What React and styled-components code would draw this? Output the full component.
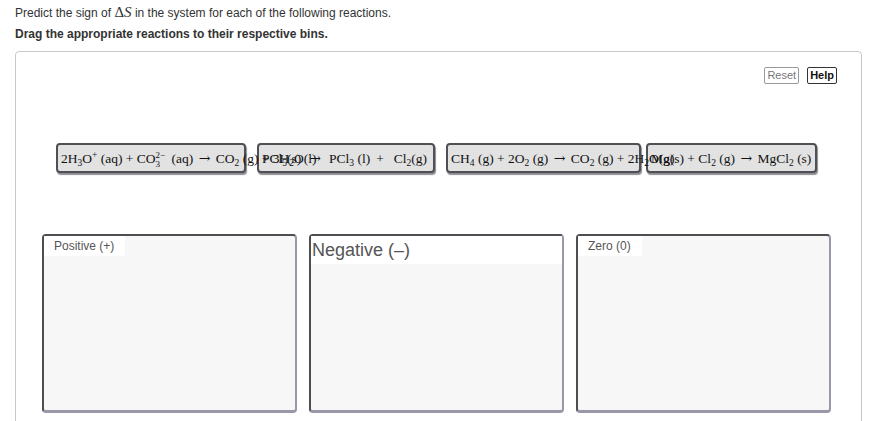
import React from "react";
import styled, { createGlobalStyle } from "styled-components";

const Global = createGlobalStyle`
  body {
    margin: 0;
    background: #fff;
    font-family: "Liberation Sans", Arial, sans-serif;
    color: #333;
  }
`;

const Page = styled.div`
  padding: 5px 15px 0 15px;
  height: 421px;
  box-sizing: border-box;
  overflow: hidden;
`;

const Prompt = styled.p`
  margin: 0;
  font-size: 12px;
  line-height: 14px;
  color: #333;
`;

const Instruction = styled(Prompt)`
  margin-top: 7px;
  font-weight: bold;
`;

const Delta = styled.span`
  font-family: "Liberation Serif", serif;
  font-size: 15px;
`;

const Var = styled.i`
  font-family: "Liberation Serif", serif;
  font-size: 15px;
`;

const Panel = styled.div`
  margin-top: 10px;
  border: 1px solid #c8c8c8;
  border-radius: 4px 4px 0 0;
  width: 847px;
  height: 400px;
  box-sizing: border-box;
  padding: 15px 24px 0 26px;
`;

const Toolbar = styled.div`
  display: flex;
  justify-content: flex-end;
  gap: 8px;
`;

const ToolButton = styled.button`
  font-family: "Liberation Sans", Arial, sans-serif;
  font-size: 11px;
  line-height: 13px;
  padding: 1px 2px;
  background: #fff;
  border-radius: 2px;
  border: 1px solid ${p => (p.$primary ? "#333" : "#999")};
  color: ${p => (p.$primary ? "#111" : "#777")};
  font-weight: ${p => (p.$primary ? "bold" : "normal")};
`;

const Tiles = styled.div`
  display: flex;
  margin-top: 59px;
  margin-left: 14px;
  height: 32px;
`;

const Tile = styled.div`
  position: relative;
  flex: none;
  width: ${p => p.$w}px;
  margin-left: ${p => p.$gap}px;
  height: 30px;
  box-sizing: border-box;
  background: #e2e2e2;
  border: 2px solid #4f4f55;
  border-radius: 4px;
  box-shadow: 1px 2px 1px #8d8d93;
  display: flex;
  align-items: center;
  padding-left: 3px;
  white-space: nowrap;
`;

const Formula = styled.span`
  position: relative;
  z-index: ${p => p.$z};
  font-family: "Liberation Serif", "DejaVu Serif", serif;
  font-size: 13.5px;
  line-height: 18px;
  color: #111;
  sub {
    font-size: 9.5px;
    line-height: 0;
    vertical-align: -3px;
  }
  sup {
    font-size: 9.5px;
    line-height: 0;
  }
`;

const Stack = styled.span`
  display: inline-flex;
  flex-direction: column;
  align-items: flex-start;
  vertical-align: 5px;
  font-size: 9px;
  line-height: 9px;
  margin: -9px 3px -9px 0;
`;

const Arrow = styled.span`
  font-family: "DejaVu Serif", serif;
  font-size: 14px;
  margin: 0 ${p => p.$space || 2}px;
`;

const Gap = styled.span`
  display: inline-block;
  width: ${p => p.$w}px;
`;

const Bins = styled.div`
  display: flex;
  gap: 12px;
  margin-top: 59px;
`;

const Bin = styled.div`
  width: 255px;
  height: 179px;
  box-sizing: border-box;
  background: #f7f7f7;
  border: 2px solid #9b97a8;
  border-left-color: #4d4d52;
  border-top-color: #4d4d52;
  border-bottom-width: 3px;
  border-radius: 4px;
`;

const BinLabel = styled.div`
  background: #fff;
  display: ${p => (p.$large ? "block" : "inline-block")};
  color: #555;
  font-size: ${p => (p.$large ? "18px" : "12px")};
  line-height: ${p => (p.$large ? "28px" : "20px")};
  padding: ${p => (p.$large ? "0 0 0 1px" : "0 11px 0 10px")};
`;

const to = <Arrow>→</Arrow>;

export default function App() {
  return (
    <>
      <Global />
      <Page>
        <Prompt>
          Predict the sign of <Delta>Δ</Delta><Var>S</Var> in the system for each of the following reactions.
        </Prompt>
        <Instruction>Drag the appropriate reactions to their respective bins.</Instruction>
        <Panel>
          <Toolbar>
            <ToolButton>Reset</ToolButton>
            <ToolButton $primary>Help</ToolButton>
          </Toolbar>
          <Tiles>
            <Tile $w={190} $gap={0}>
              <Formula $z={2}>
                2H<sub>3</sub>O<sup>+</sup> (aq) + CO<Stack><span>2−</span><span>3</span></Stack> (aq) {to} CO<sub>2</sub> (g) + 3H<sub>2</sub>O(l)
              </Formula>
            </Tile>
            <Tile $w={178} $gap={11}>
              <Formula $z={1}>
                PCl<sub>5</sub>(s)<Arrow $space={8}>→</Arrow>PCl<sub>3</sub> (l)<Gap $w={6} />+<Gap $w={10} />Cl<sub>2</sub>(g)
              </Formula>
            </Tile>
            <Tile $w={195} $gap={11}>
              <Formula $z={2}>
                CH<sub>4</sub> (g) + 2O<sub>2</sub> (g) {to} CO<sub>2</sub> (g) + 2H<sub>2</sub>O(g)
              </Formula>
            </Tile>
            <Tile $w={171} $gap={5}>
              <Formula $z={1}>
                Mg(s) + Cl<sub>2</sub> (g) {to} MgCl<sub>2</sub> (s)
              </Formula>
            </Tile>
          </Tiles>
          <Bins>
            <Bin>
              <BinLabel>Positive (+)</BinLabel>
            </Bin>
            <Bin>
              <BinLabel $large>Negative (–)</BinLabel>
            </Bin>
            <Bin>
              <BinLabel>Zero (0)</BinLabel>
            </Bin>
          </Bins>
        </Panel>
      </Page>
    </>
  );
}
